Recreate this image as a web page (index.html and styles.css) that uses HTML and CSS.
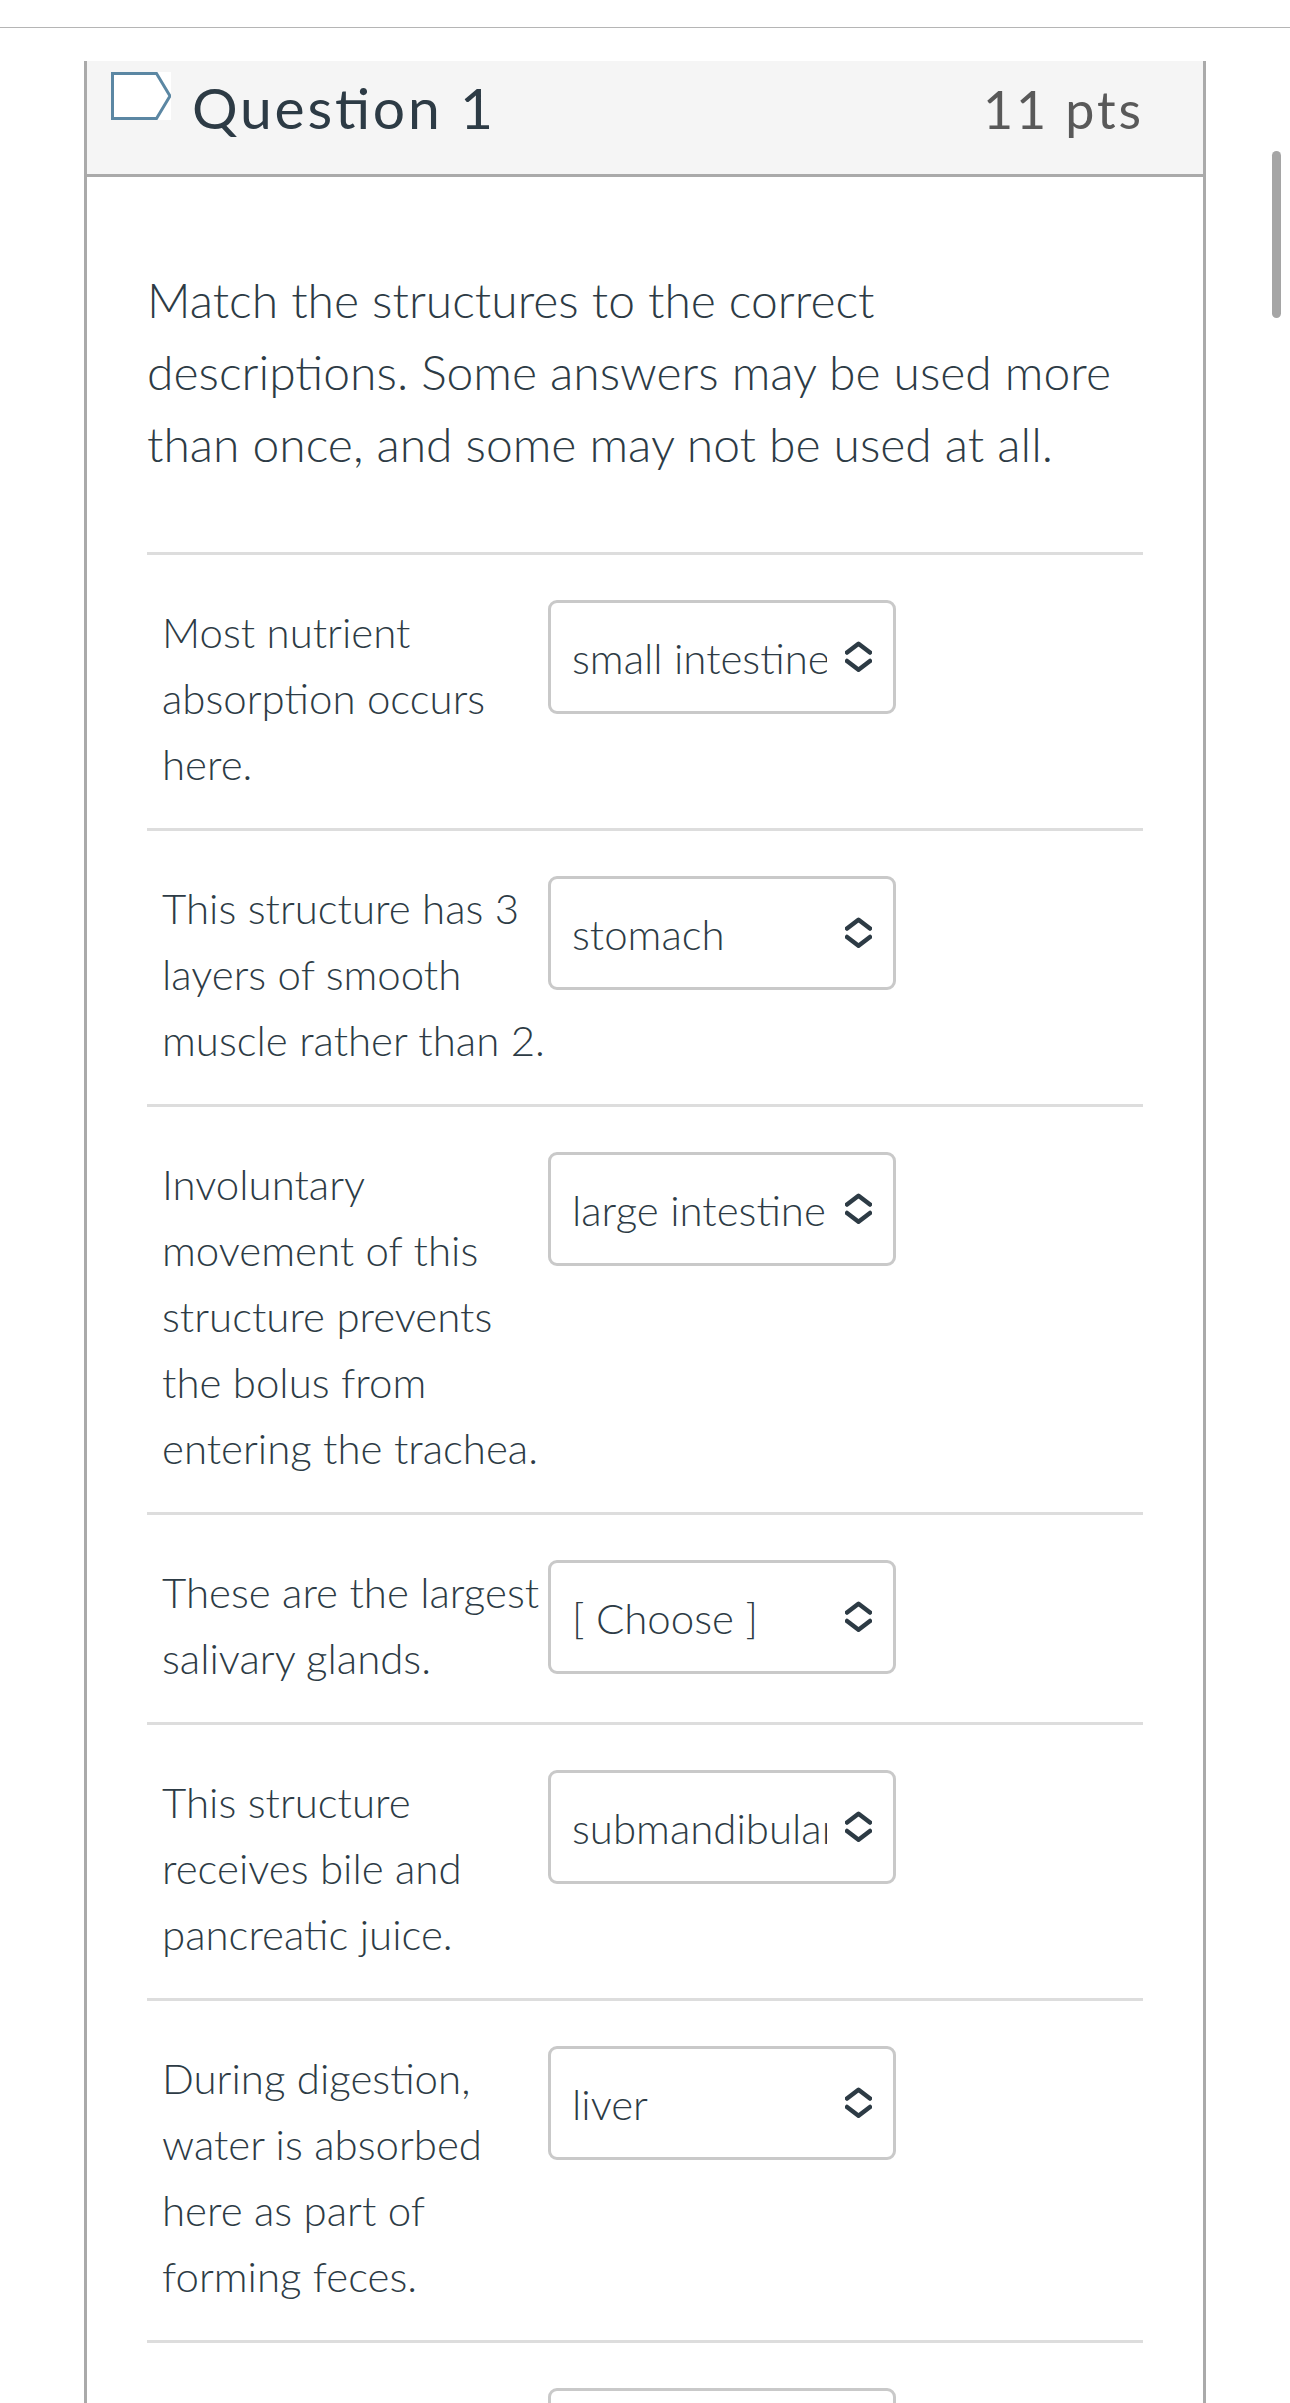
FILE: index.html
```html
<!DOCTYPE html>
<html lang="en">
<head>
  <meta charset="UTF-8" />
  <meta name="viewport" content="width=device-width, initial-scale=1.0"/>
  <title>Quiz</title>
  <link rel="stylesheet" href="styles.css">
</head>
<body>

  <div class="top-rule"></div>

  <div class="question">
    <!-- Question header -->
    <div class="header">
      <svg class="flag" width="60" height="48" viewBox="0 0 60 48">
        <rect width="60" height="48" fill="#fff"/>
        <path d="M1.5 1.5H45.5L59 24L45.5 46.5H1.5Z" fill="none" stroke="#5b87a3" stroke-width="3"/>
      </svg>
      <span class="name">Question 1</span>
      <span class="points">11 pts</span>
    </div>

    <div class="text">
      <p class="prompt">Match the structures to the correct descriptions. Some answers may be used more than once, and some may not be used at all.</p>

      <!-- Matching answers -->
      <div class="answer">
        <label class="match-left" for="a1">Most nutrient absorption occurs here.</label>
        <div class="match-right">
          <select id="a1"><option>small intestine</option></select>
          <svg class="arrows" viewBox="0 0 27 32"><path d="M2 11.5L13.5 2.8L25 11.5M2 20L13.5 28.7L25 20"/></svg>
        </div>
      </div>

      <div class="answer">
        <label class="match-left" for="a2">This structure has 3 layers of smooth muscle rather than 2.</label>
        <div class="match-right">
          <select id="a2"><option>stomach</option></select>
          <svg class="arrows" viewBox="0 0 27 32"><path d="M2 11.5L13.5 2.8L25 11.5M2 20L13.5 28.7L25 20"/></svg>
        </div>
      </div>

      <div class="answer">
        <label class="match-left" for="a3">Involuntary movement of this structure prevents the bolus from entering the trachea.</label>
        <div class="match-right">
          <select id="a3"><option>large intestine</option></select>
          <svg class="arrows" viewBox="0 0 27 32"><path d="M2 11.5L13.5 2.8L25 11.5M2 20L13.5 28.7L25 20"/></svg>
        </div>
      </div>

      <div class="answer">
        <label class="match-left" for="a4">These are the largest salivary glands.</label>
        <div class="match-right">
          <select id="a4"><option>[ Choose ]</option></select>
          <svg class="arrows" viewBox="0 0 27 32"><path d="M2 11.5L13.5 2.8L25 11.5M2 20L13.5 28.7L25 20"/></svg>
        </div>
      </div>

      <div class="answer">
        <label class="match-left" for="a5">This structure receives bile and pancreatic juice.</label>
        <div class="match-right">
          <select id="a5"><option>submandibular</option></select>
          <svg class="arrows" viewBox="0 0 27 32"><path d="M2 11.5L13.5 2.8L25 11.5M2 20L13.5 28.7L25 20"/></svg>
        </div>
      </div>

      <div class="answer">
        <label class="match-left" for="a6">During digestion, water is absorbed here as part of forming feces.</label>
        <div class="match-right">
          <select id="a6"><option>liver</option></select>
          <svg class="arrows" viewBox="0 0 27 32"><path d="M2 11.5L13.5 2.8L25 11.5M2 20L13.5 28.7L25 20"/></svg>
        </div>
      </div>

      <div class="answer">
        <div class="match-left"></div>
        <div class="match-right">
          <select id="a7"></select>
        </div>
      </div>
    </div>
  </div>

  <div class="scroll-thumb"></div>

</body>
</html>
```

FILE: styles.css
```css
/* Reset & base */
* { box-sizing: border-box; margin: 0; padding: 0; }
body {
  position: relative;
  height: 2403px;
  overflow: hidden;
  font-family: Lato, sans-serif;
  font-weight: 300;
  font-feature-settings: "liga" 1;
  background: #fff;
  color: #2d3b45;
}
.top-rule {
  height: 28px;
  border-bottom: 1px solid #b5b5b5;
}

/* Question card */
.question {
  width: 1122px;
  margin: 33px 0 0 84px;
  border: 3px solid #aaa;
  border-top: none;
}

/* Header */
.header {
  display: flex;
  height: 116px;
  padding: 0 59px 0 24px;
  background: #f5f5f5;
  border-bottom: 3px solid #aaa;
  font-weight: 400;
}
.flag {
  display: block;
  margin-top: 11px;
}
.name {
  margin-left: 21px;
  font-size: 57px;
  line-height: 92px;
  letter-spacing: 2.8px;
}
.points {
  margin-left: auto;
  font-size: 52px;
  line-height: 96px;
  letter-spacing: 2.9px;
  color: #595959;
}

/* Question text */
.text { padding: 87px 60px 0; }
.prompt {
  font-size: 48px;
  line-height: 72px;
  margin-bottom: 72px;
}

/* Answer rows */
.answer {
  display: flex;
  border-top: 3px solid #ddd;
  padding: 44px 0 31px 15px;
}
.match-left {
  width: 386px;
  font-size: 42px;
  line-height: 66px;
}
.match-right {
  position: relative;
  width: 348px;
  height: 114px;
  margin: 1px 0 -1000px;
}
.match-right select {
  display: block;
  appearance: none;
  width: 348px;
  height: 114px;
  padding: 2px 66px 0 21px;
  border: 3px solid #c9c9c9;
  border-radius: 9px;
  background: #fff;
  font: inherit;
  font-size: 42px;
  font-feature-settings: inherit;
  color: inherit;
}
.arrows {
  position: absolute;
  top: 41px;
  right: 24px;
  width: 27px;
  height: 32px;
  fill: none;
  stroke: #2d3b45;
  stroke-width: 4.5;
  stroke-linecap: round;
  stroke-linejoin: round;
  pointer-events: none;
}

/* Page scroll indicator */
.scroll-thumb {
  position: absolute;
  top: 151px;
  right: 9px;
  width: 9px;
  height: 167px;
  border-radius: 5px;
  background: #a5a5a5;
}
```
